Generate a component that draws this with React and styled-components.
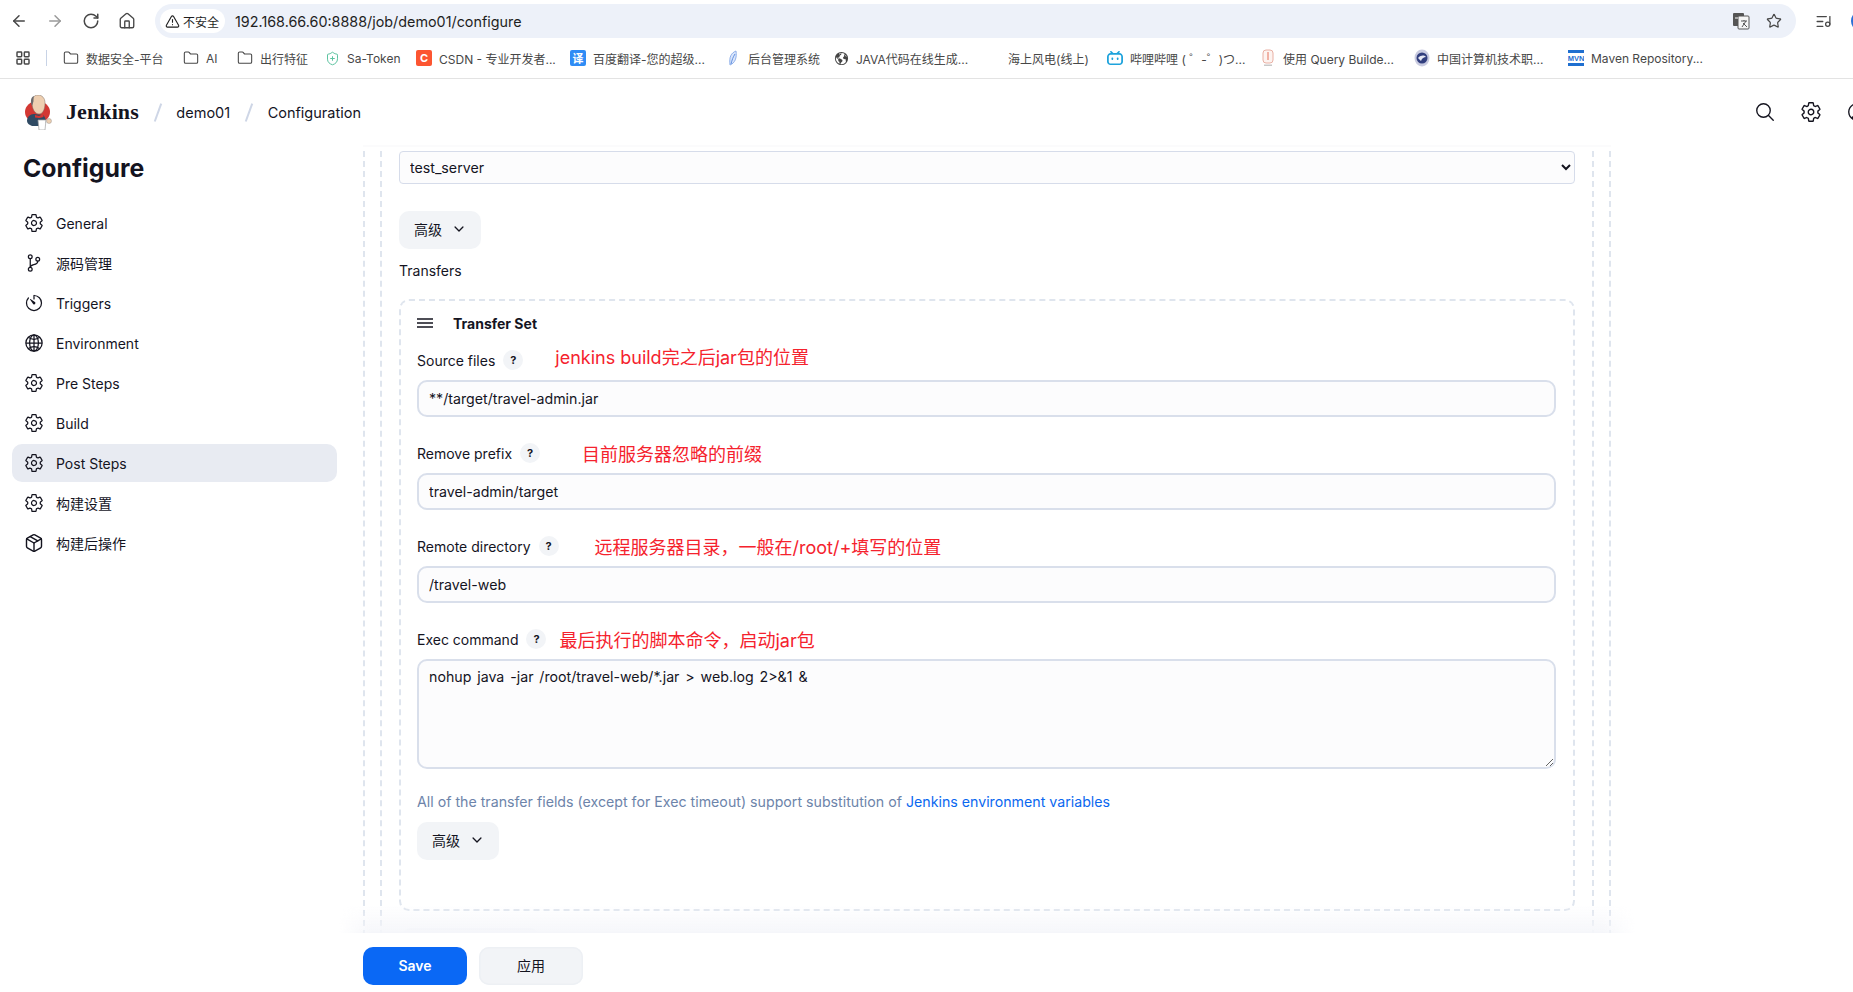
import React from 'react';
import styled, { createGlobalStyle } from 'styled-components';
import { ArrowLeft, ArrowRight, RotateCw, Home, TriangleAlert, Star, ListMusic, LayoutGrid, Folder, ShieldPlus, Package } from 'lucide-react';
import {
  IoSettingsOutline,
  IoGitBranchOutline,
  IoTimerOutline,
  IoGlobeOutline,
  IoSearchOutline,
  IoChevronDown,
  IoEarth,
  IoPersonCircleOutline,
} from 'react-icons/io5';
import { SiBilibili } from 'react-icons/si';

const GlobalStyle = createGlobalStyle`
  html, body {
    margin: 0;
    height: 100%;
    overflow: hidden;
    background: #fff;
  }
  body {
    font-family: Inter, "Noto Sans CJK SC", sans-serif;
    font-size: 14px;
    color: #14141f;
  }
`;

const Page = styled.div`
  display: flex;
  flex-direction: column;
  height: 100vh;
  overflow: hidden;
`;

const Toolbar = styled.div`
  display: flex;
  align-items: center;
  flex: none;
  height: 42px;
  padding-left: 10px;
  color: #474747;
`;

const NavIcons = styled.div`
  display: flex;
  align-items: center;
  flex: none;
  gap: 18px;
`;

const AddressBar = styled.div`
  display: flex;
  align-items: center;
  flex: none;
  width: 1641px;
  height: 34px;
  margin-left: 19px;
  padding: 0 14px 0 5px;
  box-sizing: border-box;
  border-radius: 17px;
  background: #edf1f9;
`;

const SecurityChip = styled.div`
  display: flex;
  align-items: center;
  gap: 3px;
  height: 24px;
  padding: 0 6px 0 5px;
  border-radius: 12px;
  background: #fff;
  font-size: 12px;
  color: #1f1f1f;
`;

const Url = styled.span`
  margin-left: 10px;
  font-size: 14.35px;
  color: #1f1f1f;
`;

const AddressActions = styled.div`
  display: flex;
  align-items: center;
  gap: 16px;
  margin-left: auto;
`;

const ProfileGroup = styled.div`
  display: flex;
  align-items: center;
  flex: none;
  gap: 19px;
  margin-left: 19px;
`;

const ProfileRing = styled.div`
  flex: none;
  width: 18px;
  height: 18px;
  border: 2px solid #2a6fd6;
  border-radius: 50%;
`;

const Bookmarks = styled.div`
  display: flex;
  align-items: center;
  flex: none;
  height: 37px;
  padding: 0 0 4px 15px;
  box-sizing: border-box;
  border-bottom: 1px solid #e3e3e3;
  font-size: 12px;
  color: #474747;
  white-space: nowrap;
`;

const Separator = styled.div`
  width: 1px;
  height: 16px;
  margin: 0 16px 0 15px;
  background: #c8d3e6;
`;

const Bookmark = styled.div`
  display: flex;
  align-items: center;
  flex: none;
  gap: 7px;
  width: ${(p) => p.$w}px;
`;

const IconSlot = styled.span`
  display: flex;
  align-items: center;
  justify-content: center;
  flex: none;
  width: 16px;
  height: 16px;
`;

const Favicon = styled(IconSlot)`
  border-radius: 2px;
  background: ${(p) => p.$bg};
  color: #fff;
  font-size: 11px;
  font-weight: 700;
`;

const JenkinsBar = styled.header`
  display: flex;
  align-items: center;
  flex: none;
  height: 66px;
  padding-left: 25px;
`;

const Brand = styled.div`
  display: flex;
  align-items: center;
  gap: 13px;
  font-family: "Liberation Serif", serif;
  font-size: 22px;
  font-weight: 700;
  letter-spacing: 0.1px;
`;

const Slash = styled.span`
  width: 1.5px;
  height: 19px;
  margin: 0 ${(p) => p.$m}px;
  background: #ced6e6;
  transform: rotate(20deg);
`;

const Crumb = styled.span`
  font-size: 14.5px;
`;

const HeaderActions = styled.div`
  display: flex;
  align-items: center;
  gap: 24px;
  margin-left: auto;
  margin-right: -15px;
  color: #14141f;
`;

const Body = styled.div`
  display: flex;
  flex: 1;
  min-height: 0;
`;

const Sidebar = styled.aside`
  flex: none;
  width: 363px;
  padding: 6px 26px 0 12px;
  box-sizing: border-box;
`;

const SideTitle = styled.h1`
  margin: 0 0 19px 11px;
  font-size: 24.8px;
  font-weight: 700;
  line-height: 34px;
`;

const SideItem = styled.div`
  display: flex;
  align-items: center;
  gap: 12px;
  height: 38px;
  margin-bottom: 2px;
  padding-left: 12px;
  border-radius: 10px;
  background: ${(p) => (p.$active ? '#e8ebf2' : 'transparent')};
  font-size: 14px;
`;

const Main = styled.main`
  display: flex;
  flex-direction: column;
  flex: none;
  width: 1248px;
  min-height: 0;
`;

const Scroller = styled.div`
  position: relative;
  flex: 1;
  min-height: 0;
  overflow: hidden;

  &::before {
    content: '';
    position: absolute;
    top: 0;
    left: 0;
    right: 0;
    height: 2px;
    background: #fbfbfc;
  }
`;

const Nested = styled.section`
  border-left: 2px dashed #dfe5ee;
  border-right: 2px dashed #dfe5ee;
  padding: 0 ${(p) => p.$pad}px;
`;

const ServerSelect = styled.select`
  display: block;
  width: 100%;
  height: 33px;
  margin-top: 6px;
  padding: 0 6px;
  border: 1px solid #d6dcea;
  border-radius: 4px;
  background: #fcfcfd;
  font: inherit;
  font-size: 14.2px;
  color: inherit;
`;

const GhostButton = styled.button`
  display: flex;
  align-items: center;
  justify-content: center;
  gap: 10px;
  width: 82px;
  height: 38px;
  margin-top: ${(p) => p.$top}px;
  padding: 0 0 2px;
  border: none;
  border-radius: 10px;
  background: #f2f4f7;
  font: inherit;
  color: inherit;
`;

const SectionLabel = styled.div`
  margin-top: 12px;
  line-height: 20px;
`;

const TransferBox = styled.div`
  margin-top: 18px;
  padding: 12px 17px 49px 16px;
  border: 2px dashed #dfe5ee;
  border-radius: 10px;
`;

const TransferHead = styled.div`
  display: flex;
  align-items: center;
  gap: 20px;
  height: 20px;
  margin-bottom: 15px;
  font-weight: 700;
`;

const Field = styled.div`
  margin-bottom: 24px;
`;

const LabelRow = styled.div`
  display: flex;
  align-items: center;
  height: 24px;
  margin-bottom: 8px;
`;

const HelpDot = styled.span`
  display: flex;
  align-items: center;
  justify-content: center;
  flex: none;
  width: 20px;
  height: 20px;
  margin-left: 8px;
  border-radius: 50%;
  background: #f2f4f7;
  font-size: 11px;
  font-weight: 700;
`;

const Note = styled.span`
  margin-left: ${(p) => p.$gap}px;
  margin-bottom: ${(p) => p.$lift || 0}px;
  font-family: Inter, "Noto Sans CJK SC", sans-serif;
  font-size: 18px;
  color: #f5222d;
  white-space: nowrap;
`;

const TextInput = styled.input`
  display: block;
  width: 100%;
  height: 37px;
  padding: 0 10px;
  box-sizing: border-box;
  border: 2px solid #d9dfeb;
  border-radius: 10px;
  background: #fcfcfd;
  font: inherit;
  font-size: 14.2px;
  color: inherit;
`;

const CommandInput = styled.textarea`
  display: block;
  width: 100%;
  height: 110px;
  padding: 6px 10px;
  box-sizing: border-box;
  border: 2px solid #d9dfeb;
  border-radius: 10px;
  background: #fcfcfd;
  font: inherit;
  font-size: 14.2px;
  line-height: 20px;
  word-spacing: 1.9px;
  color: inherit;
`;

const HelpText = styled.div`
  margin-top: -1px;
  font-size: 14.2px;
  line-height: 20px;
  color: #6d84aa;
`;

const DocLink = styled.a`
  color: #0a68f0;
  text-decoration: none;
`;

const PeekButton = styled.div`
  width: 139px;
  height: 38px;
  margin: 17px 0 0 2px;
  border-radius: 10px;
  background: #f2f4f7;
`;

const SaveBar = styled.div`
  position: relative;
  display: flex;
  flex: none;
  gap: 12px;
  height: 59px;
  padding-top: 14px;
  box-sizing: border-box;
  background: #fff;

  &::before {
    content: '';
    position: absolute;
    left: -24px;
    right: -24px;
    top: -28px;
    height: 28px;
    background: linear-gradient(rgba(245, 246, 250, 0), rgba(245, 246, 250, 0.95));
    mask-image: linear-gradient(90deg, transparent, #000 32px, #000 calc(100% - 32px), transparent);
    pointer-events: none;
  }
`;

const SaveButton = styled.button`
  width: 104px;
  height: 38px;
  padding: 0 0 2px;
  border: none;
  border-radius: 10px;
  background: ${(p) => (p.$primary ? '#0a68f5' : '#f2f4f7')};
  box-shadow: ${(p) => (p.$primary ? 'none' : 'inset 0 0 0 1.5px #edf0f4')};
  font: inherit;
  font-weight: ${(p) => (p.$primary ? 600 : 400)};
  color: ${(p) => (p.$primary ? '#fff' : 'inherit')};
`;

const PackageIcon = ({ size }) => <Package size={size} strokeWidth={1.7} />;

const sideItems = [
  { label: 'General', Icon: IoSettingsOutline },
  { label: '源码管理', Icon: IoGitBranchOutline },
  { label: 'Triggers', Icon: IoTimerOutline },
  { label: 'Environment', Icon: IoGlobeOutline },
  { label: 'Pre Steps', Icon: IoSettingsOutline },
  { label: 'Build', Icon: IoSettingsOutline },
  { label: 'Post Steps', Icon: IoSettingsOutline, active: true },
  { label: '构建设置', Icon: IoSettingsOutline },
  { label: '构建后操作', Icon: PackageIcon },
];

const fields = [
  { label: 'Source files', value: '**/target/travel-admin.jar', note: 'jenkins build完之后jar包的位置', gap: 32, lift: 8 },
  { label: 'Remove prefix', value: 'travel-admin/target', note: '目前服务器忽略的前缀', gap: 42 },
  { label: 'Remote directory', value: '/travel-web', note: '远程服务器目录，一般在/root/+填写的位置', gap: 36 },
];

const JenkinsLogo = () => (
  <svg width="28" height="35" viewBox="0 0 28 35">
    <ellipse cx="12.5" cy="17" rx="12.5" ry="11" fill="#d33833" />
    <path d="M2 26c0-4 3-7 7-7l9 1c2 2 3 4 3 7l-3 4H7c-3-1-5-3-5-5z" fill="#2f4a63" />
    <path d="M7 8c0-5 2-8 6-8s7 3 7 8c0 6-2 11-6 11-4 0-7-5-7-11z" fill="#eecfb1" stroke="#7a6a60" strokeWidth=".5" />
    <path d="M7 11C5 6 6 2 9 1c-1 3 0 5-1 7z" fill="#6d6b6d" />
    <path d="M10 20l4 1 4-2 .5 3-4 1-4.500-.5z" fill="#d33833" />
    <path d="M13 25h8l-1 10h-6z" fill="#fff" stroke="#a0a0a0" strokeWidth=".7" />
    <circle cx="24" cy="26" r="2.500" fill="#eecfb1" stroke="#888" strokeWidth=".4" />
  </svg>
);

const TranslateIcon = () => (
  <svg width="18" height="18" viewBox="0 0 18 18">
    <rect x="1" y="1" width="11" height="13" rx="1" fill="#555" />
    <rect x="6" y="4" width="11" height="13" rx="1" fill="#f5f5f5" stroke="#555" />
    <path d="M3 6h3" stroke="#fff" fill="none" />
    <path d="M9 9h6M12 8v1M10 15l4-6M11 11l4 4" stroke="#555" fill="none" />
  </svg>
);

const LeafIcon = () => (
  <svg width="14" height="16" viewBox="0 0 14 16">
    <path d="M10 1C5 3 3 7 4 15c5-2 7-7 6-14z" fill="#dbe6fb" stroke="#8fb0ea" />
    <path d="M9 4c-2 3-3 6-4 10" stroke="#5f8fe0" fill="none" />
  </svg>
);

const DocIcon = () => (
  <svg width="14" height="18" viewBox="0 0 14 18">
    <rect x="2" y="1" width="10" height="13" rx="3" fill="#fdf3f0" stroke="#e9b0a4" />
    <path d="M7 3v8" stroke="#e5705a" />
    <rect x="3" y="15.500" width="8" height="1.500" fill="#c8c8c8" />
  </svg>
);

const OrgIcon = () => (
  <svg width="16" height="18" viewBox="0 0 16 18">
    <ellipse cx="8" cy="9" rx="7.500" ry="8.500" fill="#c9cbe0" />
    <circle cx="8" cy="9" r="5.500" fill="#323f7e" />
    <path d="M4 9c3-3 6-3 8-1-2 0-4 1-5 4z" fill="#e6e8f4" />
  </svg>
);

const MavenIcon = () => (
  <svg width="16" height="16" viewBox="0 0 16 16">
    <rect width="16" height="3" fill="#1f6fd0" />
    <rect y="13" width="16" height="3" fill="#1f6fd0" />
    <text x="8" y="11" textAnchor="middle" fontSize="7.500" fontWeight="700" fontFamily="Liberation Sans" fill="#1f6fd0">MVN</text>
  </svg>
);

const HandleIcon = () => (
  <svg width="16" height="10" viewBox="0 0 16 10">
    <path d="M0 1h16M0 5h16M0 9h16" stroke="#14141f" strokeWidth="1.4" />
  </svg>
);

const FolderIcon = () => <Folder size={16} strokeWidth={1.6} />;

const bookmarks = [
  { w: 120, label: '数据安全-平台', icon: <FolderIcon /> },
  { w: 54, label: 'AI', icon: <FolderIcon /> },
  { w: 87, label: '出行特征', icon: <FolderIcon /> },
  { w: 92, label: 'Sa-Token', icon: <ShieldPlus size={15} color="#5cc3a0" strokeWidth={1.6} /> },
  { w: 154, label: 'CSDN - 专业开发者...', icon: <Favicon $bg="#fc5531">C</Favicon> },
  { w: 155, label: '百度翻译-您的超级...', icon: <Favicon $bg="#2f8cf5">译</Favicon> },
  { w: 108, label: '后台管理系统', icon: <LeafIcon /> },
  { w: 152, label: 'JAVA代码在线生成...', icon: <IoEarth size={15} color="#444" /> },
  { w: 122, label: '海上风电(线上)', icon: null },
  { w: 153, label: '哔哩哔哩 ( ゜-゜)つ...', icon: <SiBilibili size={16} color="#1ea3dc" /> },
  { w: 154, label: '使用 Query Builde...', icon: <DocIcon /> },
  { w: 154, label: '中国计算机技术职...', icon: <OrgIcon /> },
  { w: 150, label: 'Maven Repository...', icon: <MavenIcon /> },
];

export default function App() {
  return (
    <Page>
      <GlobalStyle />
      <Toolbar>
        <NavIcons>
          <ArrowLeft size={18} strokeWidth={2} />
          <ArrowRight size={18} strokeWidth={2} color="#9a9a9a" />
          <RotateCw size={18} strokeWidth={2} />
          <Home size={18} strokeWidth={1.8} />
        </NavIcons>
        <AddressBar>
          <SecurityChip>
            <TriangleAlert size={15} strokeWidth={1.8} />
            不安全
          </SecurityChip>
          <Url>192.168.66.60:8888/job/demo01/configure</Url>
          <AddressActions>
            <TranslateIcon />
            <Star size={16} strokeWidth={1.8} />
          </AddressActions>
        </AddressBar>
        <ProfileGroup>
          <ListMusic size={17} strokeWidth={1.8} />
          <ProfileRing />
        </ProfileGroup>
      </Toolbar>
      <Bookmarks>
        <LayoutGrid size={16} strokeWidth={2.2} />
        <Separator />
        {bookmarks.map((b) => (
          <Bookmark key={b.label} $w={b.w}>
            <IconSlot>{b.icon}</IconSlot>
            {b.label}
          </Bookmark>
        ))}
      </Bookmarks>
      <JenkinsBar>
        <Brand>
          <JenkinsLogo />
          Jenkins
        </Brand>
        <Slash $m={18} />
        <Crumb>demo01</Crumb>
        <Slash $m={18} />
        <Crumb>Configuration</Crumb>
        <HeaderActions>
          <IoSearchOutline size={22} />
          <IoSettingsOutline size={22} />
          <IoPersonCircleOutline size={22} />
        </HeaderActions>
      </JenkinsBar>
      <Body>
        <Sidebar>
          <SideTitle>Configure</SideTitle>
          {sideItems.map(({ label, Icon, active }) => (
            <SideItem key={label} $active={active}>
              <Icon size={20} />
              {label}
            </SideItem>
          ))}
        </Sidebar>
        <Main>
          <Scroller>
            <Nested $pad={15}>
              <Nested $pad={17}>
                <ServerSelect defaultValue="test_server">
                  <option>test_server</option>
                </ServerSelect>
                <GhostButton $top={27}>
                  高级 <IoChevronDown size={14} />
                </GhostButton>
                <SectionLabel>Transfers</SectionLabel>
                <TransferBox>
                  <TransferHead>
                    <HandleIcon />
                    Transfer Set
                  </TransferHead>
                  {fields.map((f) => (
                    <Field key={f.label}>
                      <LabelRow>
                        {f.label}
                        <HelpDot>?</HelpDot>
                        <Note $gap={f.gap} $lift={f.lift}>{f.note}</Note>
                      </LabelRow>
                      <TextInput defaultValue={f.value} />
                    </Field>
                  ))}
                  <Field>
                    <LabelRow>
                      Exec command
                      <HelpDot>?</HelpDot>
                      <Note $gap={13}>最后执行的脚本命令，启动jar包</Note>
                    </LabelRow>
                    <CommandInput defaultValue="nohup java -jar /root/travel-web/*.jar > web.log 2>&1 &" />
                  </Field>
                  <HelpText>
                    All of the transfer fields (except for Exec timeout) support substitution of{' '}
                    <DocLink href="#">Jenkins environment variables</DocLink>
                  </HelpText>
                  <GhostButton $top={10}>
                    高级 <IoChevronDown size={14} />
                  </GhostButton>
                </TransferBox>
                <PeekButton />
              </Nested>
            </Nested>
          </Scroller>
          <SaveBar>
            <SaveButton $primary>Save</SaveButton>
            <SaveButton>应用</SaveButton>
          </SaveBar>
        </Main>
      </Body>
    </Page>
  );
}
